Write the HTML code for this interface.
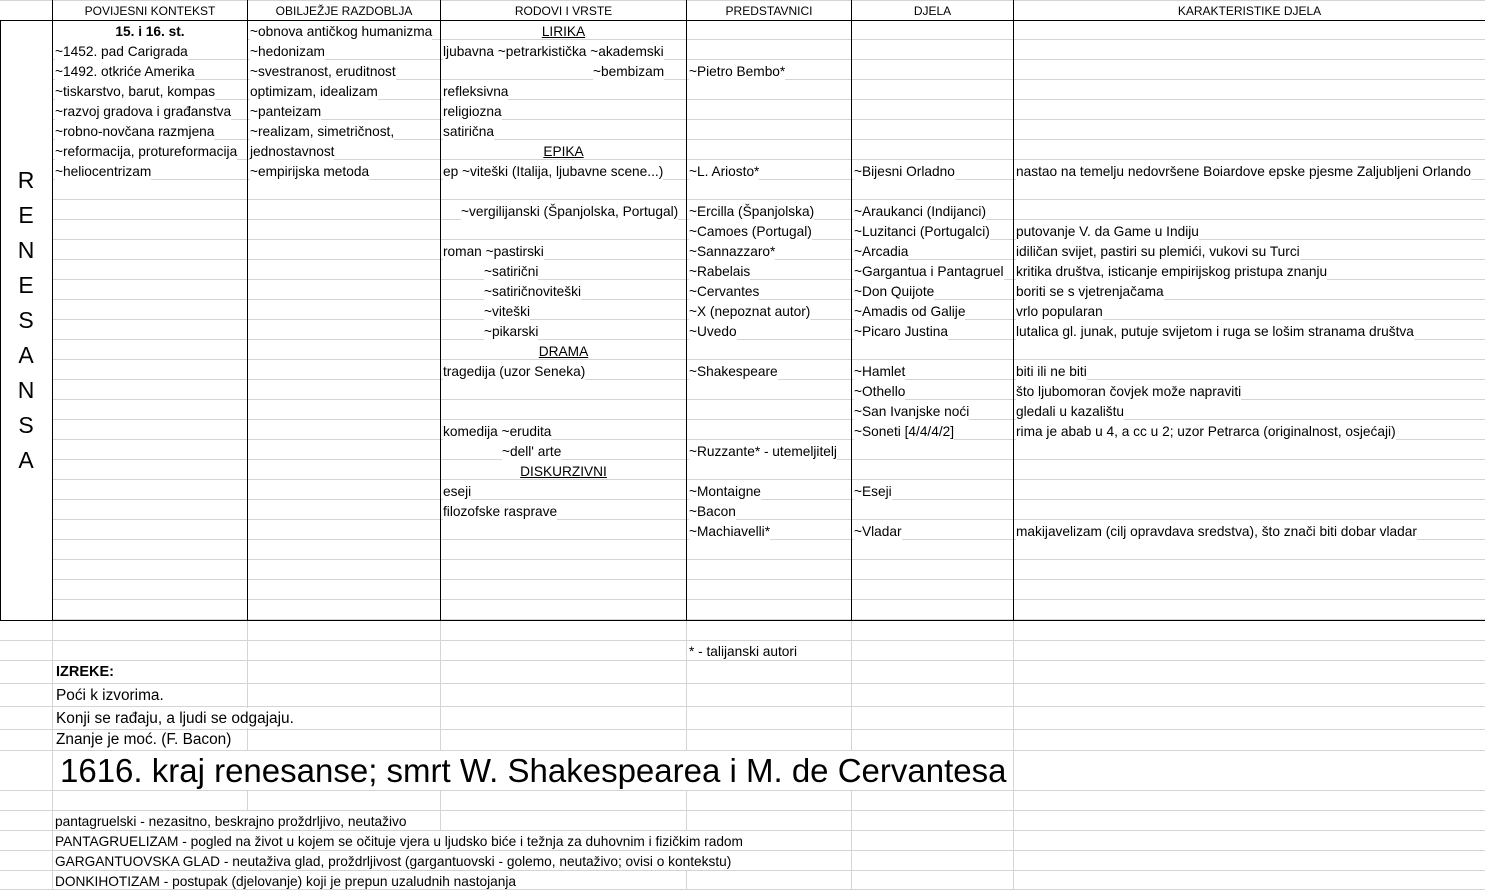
<!DOCTYPE html>
<html><head><meta charset="utf-8">
<style>
body{margin:0;width:1485px;height:890px;position:relative;background:#fff;overflow:hidden;font-family:"Liberation Sans",Arial,sans-serif;font-size:13.7px;color:#000}
.h{position:absolute;height:1px;background:#d4d4d4}
.v{position:absolute;width:1px;background:#d4d4d4}
.vb{position:absolute;width:1px;background:#000}
.hb{position:absolute;height:1px;background:#000}
.t{position:absolute;line-height:21px;height:19px;white-space:nowrap;background:#fff;z-index:2;overflow:visible}
.hd{position:absolute;top:0;line-height:22px;text-align:center;font-size:12px;z-index:2}
.u{text-decoration:underline}
.L{position:absolute;left:0;width:52px;text-align:center;font-size:23px;z-index:2}
.grid{position:absolute;left:52px;top:20px;width:1433px;height:600px;background:repeating-linear-gradient(to bottom,transparent 0,transparent 19px,#d4d4d4 19px,#d4d4d4 20px)}
</style></head><body>
<div class="h" style="left:0;top:0;width:1485px"></div>
<div class="grid"></div>
<div class="h" style="left:0;top:640px;width:1485px"></div>
<div class="h" style="left:0;top:660px;width:1485px"></div>
<div class="h" style="left:0;top:683px;width:1485px"></div>
<div class="h" style="left:0;top:706px;width:1485px"></div>
<div class="h" style="left:0;top:729px;width:1485px"></div>
<div class="h" style="left:0;top:750px;width:1485px"></div>
<div class="h" style="left:0;top:790px;width:1485px"></div>
<div class="h" style="left:0;top:810px;width:1485px"></div>
<div class="h" style="left:0;top:830px;width:1485px"></div>
<div class="h" style="left:0;top:850px;width:1485px"></div>
<div class="h" style="left:0;top:870px;width:1485px"></div>
<div class="h" style="left:0;top:889px;width:1485px"></div>
<div class="v" style="left:52px;top:620px;height:270px"></div>
<div class="v" style="left:247px;top:620px;height:270px"></div>
<div class="v" style="left:440px;top:620px;height:270px"></div>
<div class="v" style="left:686px;top:620px;height:270px"></div>
<div class="v" style="left:851px;top:620px;height:270px"></div>
<div class="v" style="left:1013px;top:620px;height:270px"></div>
<div class="vb" style="left:0;top:20px;height:600px"></div>
<div class="vb" style="left:52px;top:0;height:620px"></div>
<div class="vb" style="left:247px;top:0;height:620px"></div>
<div class="vb" style="left:440px;top:0;height:620px"></div>
<div class="vb" style="left:686px;top:0;height:620px"></div>
<div class="vb" style="left:851px;top:0;height:620px"></div>
<div class="vb" style="left:1013px;top:0;height:620px"></div>
<div class="hb" style="left:0;top:20px;width:1485px"></div>
<div class="hb" style="left:0;top:620px;width:1485px"></div>

<div class="hd" style="left:53px;width:194px">POVIJESNI KONTEKST</div>
<div class="hd" style="left:248px;width:192px">OBILJEŽJE RAZDOBLJA</div>
<div class="hd" style="left:441px;width:245px">RODOVI I VRSTE</div>
<div class="hd" style="left:687px;width:164px">PREDSTAVNICI</div>
<div class="hd" style="left:852px;width:161px">DJELA</div>
<div class="hd" style="left:1014px;width:471px">KARAKTERISTIKE DJELA</div>

<div class="L" style="top:167px">R</div>
<div class="L" style="top:202px">E</div>
<div class="L" style="top:237px">N</div>
<div class="L" style="top:272px">E</div>
<div class="L" style="top:307px">S</div>
<div class="L" style="top:342px">A</div>
<div class="L" style="top:377px">N</div>
<div class="L" style="top:412px">S</div>
<div class="L" style="top:447px">A</div>

<div class="t" style="left:53px;top:21px;width:194px;text-align:center;font-weight:bold">15. i 16. st.</div>
<div class="t" style="left:55px;top:41px">~1452. pad Carigrada</div>
<div class="t" style="left:55px;top:61px">~1492. otkriće Amerika</div>
<div class="t" style="left:55px;top:81px">~tiskarstvo, barut, kompas</div>
<div class="t" style="left:55px;top:101px">~razvoj gradova i građanstva</div>
<div class="t" style="left:55px;top:121px">~robno-novčana razmjena</div>
<div class="t" style="left:55px;top:141px">~reformacija, protureformacija</div>
<div class="t" style="left:55px;top:161px">~heliocentrizam</div>
<div class="t" style="left:250px;top:21px">~obnova antičkog humanizma</div>
<div class="t" style="left:250px;top:41px">~hedonizam</div>
<div class="t" style="left:250px;top:61px">~svestranost, eruditnost</div>
<div class="t" style="left:250px;top:81px">optimizam, idealizam</div>
<div class="t" style="left:250px;top:101px">~panteizam</div>
<div class="t" style="left:250px;top:121px">~realizam, simetričnost,</div>
<div class="t" style="left:250px;top:141px">jednostavnost</div>
<div class="t" style="left:250px;top:161px">~empirijska metoda</div>
<div class="t u" style="left:441px;top:21px;width:245px;text-align:center;background:none">LIRIKA</div>
<div class="t" style="left:443px;top:41px">ljubavna ~petrarkistička ~akademski</div>
<div class="t" style="left:593px;top:61px">~bembizam</div>
<div class="t" style="left:443px;top:81px">refleksivna</div>
<div class="t" style="left:443px;top:101px">religiozna</div>
<div class="t" style="left:443px;top:121px">satirična</div>
<div class="t u" style="left:441px;top:141px;width:245px;text-align:center;background:none">EPIKA</div>
<div class="t" style="left:443px;top:161px">ep ~viteški (Italija, ljubavne scene...)</div>
<div class="t" style="left:461px;top:201px">~vergilijanski (Španjolska, Portugal)</div>
<div class="t" style="left:443px;top:241px">roman ~pastirski</div>
<div class="t" style="left:484px;top:261px">~satirični</div>
<div class="t" style="left:484px;top:281px">~satiričnoviteški</div>
<div class="t" style="left:484px;top:301px">~viteški</div>
<div class="t" style="left:484px;top:321px">~pikarski</div>
<div class="t u" style="left:441px;top:341px;width:245px;text-align:center;background:none">DRAMA</div>
<div class="t" style="left:443px;top:361px">tragedija (uzor Seneka)</div>
<div class="t" style="left:443px;top:421px">komedija ~erudita</div>
<div class="t" style="left:502px;top:441px">~dell' arte</div>
<div class="t u" style="left:441px;top:461px;width:245px;text-align:center;background:none">DISKURZIVNI</div>
<div class="t" style="left:443px;top:481px">eseji</div>
<div class="t" style="left:443px;top:501px">filozofske rasprave</div>
<div class="t" style="left:689px;top:61px">~Pietro Bembo*</div>
<div class="t" style="left:689px;top:161px">~L. Ariosto*</div>
<div class="t" style="left:689px;top:201px">~Ercilla (Španjolska)</div>
<div class="t" style="left:689px;top:221px">~Camoes (Portugal)</div>
<div class="t" style="left:689px;top:241px">~Sannazzaro*</div>
<div class="t" style="left:689px;top:261px">~Rabelais</div>
<div class="t" style="left:689px;top:281px">~Cervantes</div>
<div class="t" style="left:689px;top:301px">~X (nepoznat autor)</div>
<div class="t" style="left:689px;top:321px">~Uvedo</div>
<div class="t" style="left:689px;top:361px">~Shakespeare</div>
<div class="t" style="left:689px;top:441px">~Ruzzante* - utemeljitelj</div>
<div class="t" style="left:689px;top:481px">~Montaigne</div>
<div class="t" style="left:689px;top:501px">~Bacon</div>
<div class="t" style="left:689px;top:521px">~Machiavelli*</div>
<div class="t" style="left:854px;top:161px">~Bijesni Orladno</div>
<div class="t" style="left:854px;top:201px">~Araukanci (Indijanci)</div>
<div class="t" style="left:854px;top:221px">~Luzitanci (Portugalci)</div>
<div class="t" style="left:854px;top:241px">~Arcadia</div>
<div class="t" style="left:854px;top:261px">~Gargantua i Pantagruel</div>
<div class="t" style="left:854px;top:281px">~Don Quijote</div>
<div class="t" style="left:854px;top:301px">~Amadis od Galije</div>
<div class="t" style="left:854px;top:321px">~Picaro Justina</div>
<div class="t" style="left:854px;top:361px">~Hamlet</div>
<div class="t" style="left:854px;top:381px">~Othello</div>
<div class="t" style="left:854px;top:401px">~San Ivanjske noći</div>
<div class="t" style="left:854px;top:421px">~Soneti [4/4/4/2]</div>
<div class="t" style="left:854px;top:481px">~Eseji</div>
<div class="t" style="left:854px;top:521px">~Vladar</div>
<div class="t" style="left:1016px;top:161px">nastao na temelju nedovršene Boiardove epske pjesme Zaljubljeni Orlando</div>
<div class="t" style="left:1016px;top:221px">putovanje V. da Game u Indiju</div>
<div class="t" style="left:1016px;top:241px">idiličan svijet, pastiri su plemići, vukovi su Turci</div>
<div class="t" style="left:1016px;top:261px">kritika društva, isticanje empirijskog pristupa znanju</div>
<div class="t" style="left:1016px;top:281px">boriti se s vjetrenjačama</div>
<div class="t" style="left:1016px;top:301px">vrlo popularan</div>
<div class="t" style="left:1016px;top:321px">lutalica gl. junak, putuje svijetom i ruga se lošim stranama društva</div>
<div class="t" style="left:1016px;top:361px">biti ili ne biti</div>
<div class="t" style="left:1016px;top:381px">što ljubomoran čovjek može napraviti</div>
<div class="t" style="left:1016px;top:401px">gledali u kazalištu</div>
<div class="t" style="left:1016px;top:421px">rima je abab u 4, a cc u 2; uzor Petrarca (originalnost, osjećaji)</div>
<div class="t" style="left:1016px;top:521px">makijavelizam (cilj opravdava sredstva), što znači biti dobar vladar</div>

<div class="t" style="left:689px;top:641px">* - talijanski autori</div>
<div class="t" style="left:56px;top:662px;font-weight:bold;font-size:14.5px">IZREKE:</div>
<div class="t" style="left:56px;top:685px;height:21px;line-height:21px;font-size:15.4px">Poći k izvorima.</div>
<div class="t" style="left:56px;top:708px;height:20px;line-height:21px;font-size:15.4px">Konji se rađaju, a ljudi se odgajaju.</div>
<div class="t" style="left:56px;top:730px;line-height:20px;font-size:15.4px">Znanje je moć. (F. Bacon)</div>
<div class="t" style="left:60px;top:751px;height:39px;line-height:40px;font-size:33px">1616. kraj renesanse; smrt W. Shakespearea i M. de Cervantesa</div>
<div class="t" style="left:55px;top:811px">pantagruelski - nezasitno, beskrajno proždrljivo, neutaživo</div>
<div class="t" style="left:55px;top:831px">PANTAGRUELIZAM - pogled na život u kojem se očituje vjera u ljudsko biće i težnja za duhovnim i fizičkim radom</div>
<div class="t" style="left:55px;top:851px">GARGANTUOVSKA GLAD - neutaživa glad, proždrljivost (gargantuovski - golemo, neutaživo; ovisi o kontekstu)</div>
<div class="t" style="left:55px;top:871px;height:18px">DONKIHOTIZAM - postupak (djelovanje) koji je prepun uzaludnih nastojanja</div>
</body></html>
